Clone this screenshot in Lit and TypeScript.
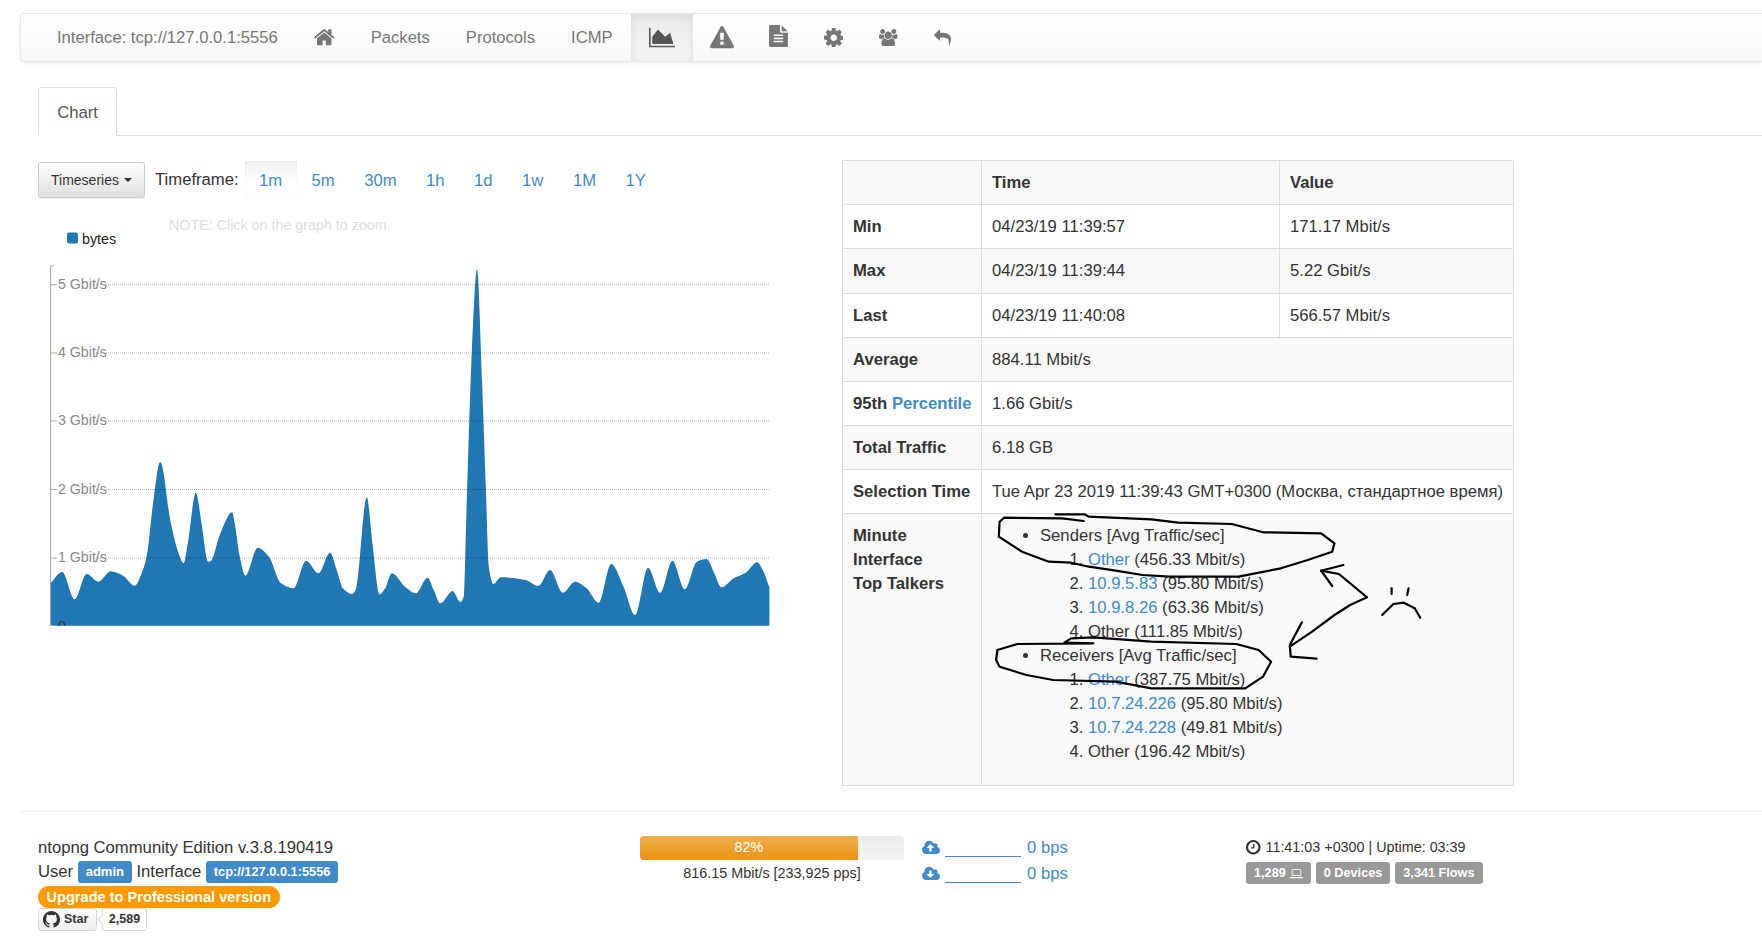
import { LitElement, html, css, svg } from "lit";
import { customElement } from "lit/decorators.js";

const ICONS: Record<string, [string, string]> = {
  home: ["0 0 1792 1792", "M1472 992v480q0 26-19 45t-45 19h-384v-384h-256v384h-384q-26 0-45-19t-19-45v-480q0-1 .5-3t.5-3l575-474 575 474q1 2 1 6zm223-69l-62 74q-8 9-21 11h-3q-13 0-21-7l-692-577-692 577q-12 8-24 7-13-2-21-11l-62-74q-8-10-7-23.500t11-21.500l719-599q32-26 76-26t76 26l244 204v-195q0-14 9-23t23-9h192q14 0 23 9t9 23v408l219 182q10 8 11 21.500t-7 23.500z"],
  area: ["0 0 2048 1792", "M2048 1536v128H0V128h128v1408h1920zM1664 512l256 896H256V832l448-576 576 576z"],
  warning: ["0 0 1792 1792", "M1024 1375v-190q0-14-9.500-23.500t-22.500-9.500h-192q-13 0-22.500 9.500t-9.500 23.500v190q0 14 9.500 23.500t22.500 9.500h192q13 0 22.500-9.500t9.500-23.500zm-2-374l18-459q0-12-10-19-13-11-24-11h-220q-11 0-24 11-10 7-10 21l17 457q0 10 10 16.500t24 6.500h185q14 0 23.500-6.500t10.500-16.500zm-14-934l768 1408q35 63-2 126-17 29-46.500 46t-63.500 17h-1536q-34 0-63.500-17t-46.500-46q-37-63-2-126l768-1408q17-31 47-49t65-18 65 18 47 49z"],
  file: ["128 0 1536 1792", "M1596 476q14 14 28 36h-472v-472q22 14 36 28zm-476 164h544v1056q0 40-28 68t-68 28h-1344q-40 0-68-28t-28-68v-1600q0-40 28-68t68-28h800v544q0 40 28 68t68 28zm160 736v-64q0-14-9-23t-23-9h-704q-14 0-23 9t-9 23v64q0 14 9 23t23 9h704q14 0 23-9t9-23zm0-256v-64q0-14-9-23t-23-9h-704q-14 0-23 9t-9 23v64q0 14 9 23t23 9h704q14 0 23-9t9-23zm0-256v-64q0-14-9-23t-23-9h-704q-14 0-23 9t-9 23v64q0 14 9 23t23 9h704q14 0 23-9t9-23z"],
  cog: ["128 128 1536 1536", "M1152 896q0-106-75-181t-181-75-181 75-75 181 75 181 181 75 181-75 75-181zm512-109v222q0 12-8 23t-20 13l-185 28q-19 54-39 91 35 50 107 138 10 12 10 25t-9 23q-27 37-99 108t-94 71q-12 0-26-9l-138-108q-44 23-91 38-16 136-29 186-7 28-36 28h-222q-14 0-24.500-8.500t-11.500-21.500l-28-184q-49-16-90-37l-141 107q-10 9-25 9-14 0-25-11-126-114-165-168-7-10-7-23 0-12 8-23 15-21 51-66.500t54-70.500q-27-50-41-99l-183-27q-13-2-21-12.500t-8-23.500v-222q0-12 8-23t19-13l186-28q14-46 39-92-40-57-107-138-10-12-10-24 0-10 9-23 26-36 98.500-107.500t94.500-71.500q13 0 26 10l138 107q44-23 91-38 16-136 29-186 7-28 36-28h222q14 0 24.500 8.500t11.500 21.500l28 184q49 16 90 37l142-107q9-9 24-9 13 0 25 10 129 119 165 170 7 8 7 22 0 12-8 23-15 21-51 66.500t-54 70.500q26 50 41 98l183 28q13 2 21 12.500t8 23.500z"],
  users: ["0 0 1920 1792", "M593 896q-162 5-265 128h-134q-82 0-138-40.500t-56-118.500q0-353 124-353 6 0 43.500 21t97.500 42.500 119 21.500q67 0 133-23-5 37-5 66 0 139 81 256zm1071 637q0 120-73 189.500t-194 69.500h-874q-121 0-194-69.500t-73-189.500q0-53 3.500-103.500t14-109 26.500-108.500 43-97.500 62-81 85.500-53.500 111.500-20q10 0 43 21.500t73 48 107 48 135 21.500 135-21.500 107-48 73-48 43-21.500q61 0 111.500 20t85.500 53.500 62 81 43 97.500 26.500 108.500 14 109 3.500 103.500zm-1024-1277q0 106-75 181t-181 75-181-75-75-181 75-181 181-75 181 75 75 181zm704 384q0 159-112.500 271.500t-271.500 112.500-271.500-112.500-112.500-271.500 112.500-271.500 271.500-112.500 271.500 112.500 112.500 271.500zm576 225q0 78-56 118.500t-138 40.500h-134q-103-123-265-128 81-117 81-256 0-29-5-66 66 23 133 23 59 0 119-21.500t97.500-42.500 43.500-21q124 0 124 353zm-128-609q0 106-75 181t-181 75-181-75-75-181 75-181 181-75 181 75 75 181z"],
  reply: ["0 0 1792 1792", "M1792 1120q0 166-127 451-3 7-10.500 24t-13.500 30-13 22q-12 17-28 17-15 0-23.500-10t-8.500-25q0-9 2.500-26.500t2.500-23.500q5-68 5-123 0-101-17.500-181t-48.500-138.500-80-101-105.500-69.500-133-42.500-154-21.500-175.500-6h-224v256q0 26-19 45t-45 19-45-19l-512-512q-19-19-19-45t19-45l512-512q19-19 45-19t45 19 19 45v256h224q713 0 875 403 53 134 53 333z"],
  up: ["0 0 1920 1792", "M1280 864q0-14-9-23l-352-352q-9-9-23-9t-23 9l-351 351q-10 12-10 24 0 14 9 23t23 9h224v352q0 13 9.500 22.500t22.500 9.500h192q13 0 22.500-9.500t9.500-22.500v-352h224q13 0 22.500-9.500t9.500-22.500zm640 288q0 159-112.500 271.500t-271.500 112.500h-1088q-185 0-316.500-131.500t-131.500-316.500q0-130 70-240t188-165q-2-30-2-43 0-212 150-362t362-150q156 0 285.500 87t188.500 231q71-62 166-62 106 0 181 75t75 181q0 76-41 138 130 31 213.500 135.500t83.500 238.500z"],
  down: ["0 0 1920 1792", "M1280 928q0-14-9-23t-23-9h-224v-352q0-13-9.500-22.500t-22.500-9.500h-192q-13 0-22.500 9.500t-9.500 22.500v352h-224q-13 0-22.500 9.500t-9.500 22.500q0 14 9 23l352 352q9 9 23 9t23-9l351-351q10-12 10-24zm640 224q0 159-112.500 271.500t-271.500 112.500h-1088q-185 0-316.500-131.500t-131.500-316.500q0-130 70-240t188-165q-2-30-2-43 0-212 150-362t362-150q156 0 285.500 87t188.500 231q71-62 166-62 106 0 181 75t75 181q0 76-41 138 130 31 213.500 135.500t83.500 238.500z"],
  clock: ["128 128 1536 1536", "M1024 544v448q0 14-9 23t-23 9h-320q-14 0-23-9t-9-23v-64q0-14 9-23t23-9h224v-352q0-14 9-23t23-9h64q14 0 23 9t9 23zm416 352q0-148-73-273t-198-198-273-73-273 73-198 198-73 273 73 273 198 198 273 73 273-73 198-198 73-273zm224 0q0 209-103 385.500t-279.500 279.500-385.500 103-385.500-103-279.500-279.500-103-385.500 103-385.500 279.500-279.500 385.500-103 385.500 103 279.500 279.500 103 385.500z"],
  laptop: ["0 0 1920 1792", "M416 1280q-66 0-113-47t-47-113v-704q0-66 47-113t113-47h1088q66 0 113 47t47 113v704q0 66-47 113t-113 47h-1088zm-32-864v704q0 13 9.500 22.500t22.500 9.500h1088q13 0 22.500-9.500t9.500-22.500v-704q0-13-9.500-22.500t-22.500-9.500h-1088q-13 0-22.500 9.500t-9.500 22.500zm1376 992h160v96q0 40-47 68t-113 28h-1600q-66 0-113-28t-47-68v-96h160zm-720 96q16 0 16-16t-16-16h-160q-16 0-16 16t16 16h160z"],
  github: ["0 0 16 16", "M8 0C3.58 0 0 3.58 0 8c0 3.54 2.29 6.53 5.47 7.59.4.07.55-.17.55-.38 0-.19-.01-.82-.01-1.49-2.01.37-2.53-.49-2.69-.94-.09-.23-.48-.94-.82-1.13-.28-.15-.68-.52-.01-.53.63-.01 1.08.58 1.23.82.72 1.21 1.87.87 2.33.66.07-.52.28-.87.51-1.07-1.78-.2-3.64-.89-3.64-3.95 0-.87.31-1.59.82-2.15-.08-.2-.36-1.02.08-2.12 0 0 .67-.21 2.2.82.64-.18 1.32-.27 2-.27.68 0 1.36.09 2 .27 1.53-1.04 2.2-.82 2.2-.82.44 1.1.16 1.92.08 2.12.51.56.82 1.27.82 2.15 0 3.07-1.87 3.75-3.65 3.95.29.25.54.73.54 1.48 0 1.07-.01 1.93-.01 2.2 0 .21.15.46.55.38A8.013 8.013 0 0016 8c0-4.42-3.58-8-8-8z"],
};

function icon(name: string, cls: string) {
  const [vb, d] = ICONS[name];
  return html`<svg class="ic ${cls}" viewBox=${vb}><path d=${d} fill="currentColor"></path></svg>`;
}

// Chart outline traced from the reference
const AREA: number[][] = [[99,1000],[122,966],[146,1048],[170,972],[193,995],[217,964],[241,977],[264,1007],[280,960],[288,915],[300,760],[314,636],[335,820],[350,910],[360,940],[368,880],[384,728],[395,820],[408,935],[413,933],[432,850],[455,787],[460,820],[470,920],[481,977],[505,893],[527,920],[551,1000],[575,1015],[600,932],[624,970],[647,908],[660,960],[672,1015],[690,1032],[697,1020],[719,742],[730,880],[744,1033],[755,1015],[768,970],[795,1012],[815,1030],[838,983],[850,1020],[863,1060],[887,1023],[902,1056],[909,1040],[914,800],[925,300],[935,58],[945,400],[952,700],[958,950],[967,1002],[982,982],[1030,990],[1055,1008],[1078,960],[1103,1028],[1127,995],[1150,1015],[1173,1058],[1198,942],[1222,1010],[1245,1095],[1270,953],[1294,1028],[1318,932],[1342,1018],[1366,935],[1385,927],[1400,970],[1414,1012],[1438,985],[1462,968],[1484,937],[1495,960],[1508,1012]];

function monotonePath(raw: number[][]): string {
  const p = raw.map(([x, y]) => [x / 1.96 - 38, 250 + y / 3 - 232]);
  const n = p.length;
  const s: number[] = [];
  for (let i = 0; i < n - 1; i++) s.push((p[i + 1][1] - p[i][1]) / (p[i + 1][0] - p[i][0]));
  const m: number[] = [s[0]];
  for (let i = 1; i < n - 1; i++) {
    m.push(s[i - 1] * s[i] <= 0 ? 0 : (2 * s[i - 1] * s[i]) / (s[i - 1] + s[i]));
  }
  m.push(s[n - 2]);
  let d = `M${p[0][0].toFixed(1)} ${p[0][1].toFixed(1)}`;
  for (let i = 0; i < n - 1; i++) {
    const h = (p[i + 1][0] - p[i][0]) / 3;
    d += `C${(p[i][0] + h).toFixed(1)} ${(p[i][1] + m[i] * h).toFixed(1)} ${(p[i + 1][0] - h).toFixed(1)} ${(p[i + 1][1] - m[i + 1] * h).toFixed(1)} ${p[i + 1][0].toFixed(1)} ${p[i + 1][1].toFixed(1)}`;
  }
  const right = p[n - 1][0].toFixed(1);
  return `${d}L${right} 393.7L${p[0][0].toFixed(1)} 393.7Z`;
}
const chartPath = monotonePath(AREA);

const SCRIBBLES: number[][][] = [
  [[568,63],[520,55],[390,53],[380,65],[378,110],[430,155],[490,185],[540,188],[580,200],[640,212],[700,225],[760,230],[915,230],[1010,205],[1070,180],[1125,155],[1130,130],[1100,100],[970,97],[900,72],[780,68],[720,58],[580,50],[570,43],[505,43]],
  [[590,430],[525,428],[540,415],[590,412],[720,425],[910,432],[960,450],[988,485],[970,530],[930,565],[720,565],[640,545],[500,540],[440,525],[380,500],[372,480],[375,450],[420,432],[590,430]],
  [[1150,195],[1100,212],[1125,258]],
  [[1100,212],[1140,222],[1203,292],[1165,315],[1130,345],[1080,395],[1030,440]],
  [[1057,367],[1030,435],[1032,470],[1090,476]],
  [[1258,265],[1258,282]],
  [[1296,265],[1293,285]],
  [[1237,345],[1262,312],[1285,308],[1310,325],[1322,353]],
];
const scribbles = SCRIBBLES.map((s) => s.map(([x, y]) => `${(830 + x / 2.24).toFixed(1)},${(500 + y / 3).toFixed(1)}`).join(" "));

const GRID = [
  { y: 52.7, t: "5 Gbit/s" },
  { y: 121, t: "4 Gbit/s" },
  { y: 189, t: "3 Gbit/s" },
  { y: 257.5, t: "2 Gbit/s" },
  { y: 326, t: "1 Gbit/s" },
];

@customElement("app-root")
export class AppRoot extends LitElement {
  static styles = css`
    :host { display: block; position: relative; width: 1762px; height: 950px; overflow: hidden; background: #fff; color: #333; font: 16.67px/24px "Liberation Sans", Arial, sans-serif; }
    a { color: #428bca; text-decoration: none; }
    .ic { display: block; flex: none; }
    .nav { display: flex; align-items: center; height: 47px; margin: 13px 0 0 20px; padding-left: 18px; border: 1px solid #e7e7e7; border-right: 0; border-radius: 4px 0 0 4px; background: linear-gradient(#fff, #f8f8f8); box-shadow: 0 1px 5px rgba(0,0,0,.075); color: #777; font-size: 16.620px; }
    .nav a { display: flex; align-items: center; height: 100%; padding: 0 18px; color: #777; }
    .nav a.active { background: linear-gradient(#ebebeb, #f3f3f3); box-shadow: inset 0 3px 9px rgba(0,0,0,.075); color: #555; }
    .i-home { width: 22.500px; height: 22.500px; margin: 0 -.75px; }
    .i-area { width: 26px; height: 23px; }
    .i-warning { width: 24px; height: 24px; margin: 0 -1px; }
    .i-file { width: 19px; height: 22px; margin-top: -4px; }
    .i-cog { width: 19.500px; height: 19.500px; }
    .i-users { width: 18.500px; height: 17.500px; }
    .i-reply { width: 17px; height: 17px; margin-top: -1px; }
    .tabs { display: flex; margin: 25px 0 0 38px; border-bottom: 1px solid #ddd; height: 48px; }
    .tab { width: 79px; height: 49px; box-sizing: border-box; padding-top: 13px; text-align: center; color: #555; background: #fff; border: 1px solid #ddd; border-bottom-color: #fff; border-radius: 4px 4px 0 0; }
    .main { display: flex; margin: 24px 0 0 38px; }
    .left { width: 804px; flex: none; padding-top: 1px; }
    .toolbar { display: flex; align-items: center; height: 38px; }
    .btn { box-sizing: border-box; width: 107px; height: 36px; margin-right: 10px; border: 1px solid #ccc; border-radius: 3px; background: linear-gradient(#fff, #e0e0e0); font-size: 14px; display: flex; align-items: center; justify-content: center; gap: 5px; box-shadow: 0 1px 1px rgba(0,0,0,.075); }
    .caret { width: 0; height: 0; border: 4px solid transparent; border-top-color: #333; border-bottom: 0; }
    .label { margin-right: 6px; }
    .pill { padding: 1px 14.750px 0; line-height: 37px; color: #428bca; }
    .pill.on { background: linear-gradient(#f1f1f1, #fff 60%); box-shadow: inset 0 0 3px rgba(0,0,0,.05); padding: 1px 14.500px 0; }
    .note { margin: 19px 0 0 131px; font-size: 14.300px; line-height: 14px; color: #ddd; }
    .chart { display: block; overflow: hidden; }
    .chart .lab { font-size: 14.200px; fill: #888; }
    .chart .zero { font-size: 14.200px; fill: #333; }
    .chart .leg { font-size: 14.300px; fill: #222; }
    table { table-layout: fixed; width: 671px; border-collapse: collapse; }
    td, th { border: 1px solid #ddd; height: 44px; box-sizing: border-box; padding: 0 10px; text-align: left; vertical-align: middle; white-space: nowrap; }
    th, td.h { font-weight: bold; }
    tr:nth-child(odd) { background: #f9f9f9; }
    tr.r45 td { height: 45px; }
    tr.tall td { height: 272px; vertical-align: top; padding-top: 10px; }
    ul, ol { margin: 0; padding: 0 0 0 48px; }
    .foot { margin: 25px 0 0 20px; border-top: 1px solid #eee; padding: 24px 0 0 18px; display: grid; grid-template-columns: 602px 282px 324px 1fr; }
    .c1 .row { display: flex; align-items: center; gap: 4.500px; height: 23px; }
    .c1 .row.first { height: 24px; }
    .c1 .up { margin-top: 2px; }
    .badge { display: inline-block; height: 22px; line-height: 22px; padding: 0 8px; box-sizing: border-box; border-radius: 3px; background: #428bca; color: #fff; font-size: 13px; font-weight: bold; white-space: nowrap; }
    .badge.tcp { font-size: 12.800px; }
    .upgrade { display: inline-block; height: 22px; line-height: 22px; padding: 0 8.500px; border-radius: 11px; background: #f90; color: #fff; font-size: 14.600px; font-weight: bold; }
    .gh { display: flex; height: 23px; gap: 5px; font-size: 12.500px; font-weight: bold; line-height: 21px; }
    .gh span { position: relative; box-sizing: border-box; border: 1px solid #d5d5d5; border-radius: 3px; padding: 0 6px; color: #333; }
    .gh .star { display: flex; align-items: center; gap: 4px; width: 59px; padding: 0 4px; background: linear-gradient(#fcfcfc, #eee); }
    .gh .count { width: 45px; background: #fff; text-align: center; padding: 0; }
    .gh .count::before { content: ""; position: absolute; left: -4px; top: 7px; width: 6px; height: 6px; background: #fff; border-left: 1px solid #d5d5d5; border-bottom: 1px solid #d5d5d5; transform: rotate(45deg); }
    .gh svg { width: 17px; height: 17px; }
    .bar { height: 24px; width: 264px; border-radius: 4px; background: linear-gradient(#ebebeb, #f5f5f5); overflow: hidden; }
    .fill { height: 100%; background: linear-gradient(#f0ad4e, #eb9316); color: #fff; font-size: 14.300px; line-height: 22px; text-align: center; }
    .speed { width: 264px; text-align: center; font-size: 14.400px; line-height: 26px; }
    .rate { display: flex; align-items: center; height: 26px; color: #428bca; }
    .rate .i-up, .rate .i-down { width: 18px; height: 18px; margin-right: 5px; }
    .rate i { display: block; width: 76px; height: 17px; border-bottom: 1px solid #3b82e0; margin-right: 6px; }
    .c3 { margin-top: -1px; }
    .time { display: flex; align-items: center; gap: 5px; height: 26.500px; margin: -2px 0 1.500px; font-size: 14.350px; }
    .i-clock { width: 14.500px; height: 14.500px; }
    .bs { display: flex; gap: 5px; }
    .bs .badge { background: #999; display: flex; align-items: center; gap: 4px; font-size: 12.700px; }
    .i-laptop { width: 13px; height: 13px; }
    .scrib { position: absolute; left: 0; top: 0; width: 1762px; height: 950px; pointer-events: none; }
    .scrib polyline { fill: none; stroke: #000; stroke-width: 2.200; stroke-linejoin: round; stroke-linecap: round; }
  `;

  render() {
    const frames = ["1m", "5m", "30m", "1h", "1d", "1w", "1M", "1Y"];
    const r1 = [["Min", "04/23/19 11:39:57", "171.17 Mbit/s"], ["Max", "04/23/19 11:39:44", "5.22 Gbit/s"], ["Last", "04/23/19 11:40:08", "566.57 Mbit/s"]];
    return html`
      <nav class="nav">
        <a>Interface: tcp://127.0.0.1:5556</a>
        <a>${icon("home", "i-home")}</a>
        <a>Packets</a><a>Protocols</a><a>ICMP</a>
        <a class="active">${icon("area", "i-area")}</a>
        <a>${icon("warning", "i-warning")}</a>
        <a>${icon("file", "i-file")}</a>
        <a>${icon("cog", "i-cog")}</a>
        <a>${icon("users", "i-users")}</a>
        <a>${icon("reply", "i-reply")}</a>
      </nav>
      <div class="tabs"><div class="tab">Chart</div></div>
      <div class="main">
        <div class="left">
          <div class="toolbar">
            <div class="btn">Timeseries <span class="caret"></span></div>
            <span class="label">Timeframe:</span>
            ${frames.map((f, i) => html`<a class="pill ${i === 0 ? "on" : ""}">${f}</a>`)}
          </div>
          <div class="note">NOTE: Click on the graph to zoom.</div>
          <svg class="chart" width="760" height="394">
            <rect x="29" y="0.500" width="11" height="11" rx="2" fill="#1f77b4"></rect>
            <text class="leg" x="44" y="12">bytes</text>
            <path d=${chartPath} fill="#1f77b4"></path>
            <text class="zero" x="20" y="399">0</text>
            <path d="M16 34H12.500V393.500H16" fill="none" stroke="#aaa"></path>
            ${GRID.map((g) => svg`
              <line x1="12" x2="19" y1=${g.y} y2=${g.y} stroke="#aaa"></line>
              <line x1="58" x2="731" y1=${g.y} y2=${g.y} stroke="#000" stroke-opacity=".3" stroke-dasharray="1 1"></line>
              <text class="lab" x="20" y=${g.y + 4}>${g.t}</text>`)}
          </svg>
        </div>
        <table>
          <colgroup><col style="width:139px" /><col style="width:298px" /><col style="width:234px" /></colgroup>
          <tr><th></th><th>Time</th><th>Value</th></tr>
          ${r1.map((r, i) => html`<tr class=${i === 1 ? "r45" : ""}><td class="h">${r[0]}</td><td>${r[1]}</td><td>${r[2]}</td></tr>`)}
          <tr><td class="h">Average</td><td colspan="2">884.11 Mbit/s</td></tr>
          <tr><td class="h">95th <a>Percentile</a></td><td colspan="2">1.66 Gbit/s</td></tr>
          <tr><td class="h">Total Traffic</td><td colspan="2">6.18 GB</td></tr>
          <tr><td class="h">Selection Time</td><td colspan="2">Tue Apr 23 2019 11:39:43 GMT+0300 (Москва, стандартное время)</td></tr>
          <tr class="tall">
            <td class="h">Minute<br />Interface<br />Top Talkers</td>
            <td colspan="2">
              <ul>
                <li>Senders [Avg Traffic/sec]
                  <ol><li><a>Other</a> (456.33 Mbit/s)</li><li><a>10.9.5.83</a> (95.80 Mbit/s)</li><li><a>10.9.8.26</a> (63.36 Mbit/s)</li><li>Other (111.85 Mbit/s)</li></ol>
                </li>
                <li>Receivers [Avg Traffic/sec]
                  <ol><li><a>Other</a> (387.75 Mbit/s)</li><li><a>10.7.24.226</a> (95.80 Mbit/s)</li><li><a>10.7.24.228</a> (49.81 Mbit/s)</li><li>Other (196.42 Mbit/s)</li></ol>
                </li>
              </ul>
            </td>
          </tr>
        </table>
      </div>
      <footer class="foot">
        <div class="c1">
          <div class="row first">ntopng Community Edition v.3.8.190419</div>
          <div class="row">User <span class="badge">admin</span> Interface <span class="badge tcp">tcp://127.0.0.1:5556</span></div>
          <div class="row up"><span class="upgrade">Upgrade to Professional version</span></div>
          <div class="gh"><span class="star">${icon("github", "")}Star</span><span class="count">2,589</span></div>
        </div>
        <div class="c2">
          <div class="bar"><div class="fill" style="width:82.500%">82%</div></div>
          <div class="speed">816.15 Mbit/s [233,925 pps]</div>
        </div>
        <div class="c3">
          <div class="rate">${icon("up", "i-up")}<i></i>0 bps</div>
          <div class="rate">${icon("down", "i-down")}<i></i>0 bps</div>
        </div>
        <div class="c4">
          <div class="time">${icon("clock", "i-clock")}11:41:03 +0300 | Uptime: 03:39</div>
          <div class="bs"><span class="badge">1,289 ${icon("laptop", "i-laptop")}</span><span class="badge">0 Devices</span><span class="badge">3,341 Flows</span></div>
        </div>
      </footer>
      <svg class="scrib">${scribbles.map((p) => svg`<polyline points=${p}></polyline>`)}</svg>
    `;
  }
}
